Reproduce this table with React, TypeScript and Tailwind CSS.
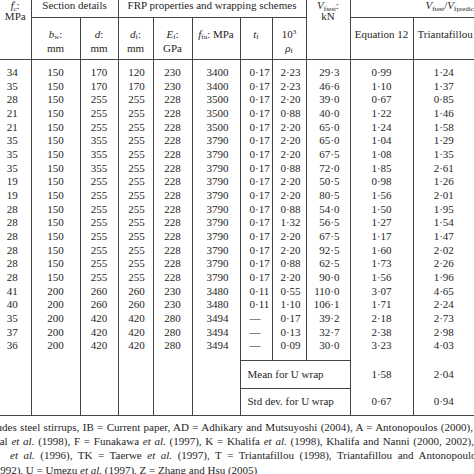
import type { ReactNode } from 'react'

const rows: string[][] = [
  ['34', '150', '170', '120', '230', '3400', '0·17', '2·23', '29·3', '0·99', '1·24'],
  ['35', '150', '170', '170', '230', '3400', '0·17', '2·23', '46·6', '1·10', '1·37'],
  ['28', '150', '255', '255', '228', '3500', '0·17', '2·20', '39·0', '0·67', '0·85'],
  ['21', '150', '255', '255', '228', '3500', '0·17', '0·88', '40·0', '1·22', '1·46'],
  ['21', '150', '255', '255', '228', '3500', '0·17', '2·20', '65·0', '1·24', '1·58'],
  ['35', '150', '355', '255', '228', '3790', '0·17', '2·20', '65·0', '1·04', '1·29'],
  ['35', '150', '355', '255', '228', '3790', '0·17', '2·20', '67·5', '1·08', '1·35'],
  ['35', '150', '355', '255', '228', '3790', '0·17', '0·88', '72·0', '1·85', '2·61'],
  ['19', '150', '255', '255', '228', '3790', '0·17', '2·20', '50·5', '0·98', '1·26'],
  ['19', '150', '255', '255', '228', '3790', '0·17', '2·20', '80·5', '1·56', '2·01'],
  ['28', '150', '255', '255', '228', '3790', '0·17', '0·88', '54·0', '1·50', '1·95'],
  ['28', '150', '255', '255', '228', '3790', '0·17', '1·32', '56·5', '1·27', '1·54'],
  ['28', '150', '255', '255', '228', '3790', '0·17', '2·20', '67·5', '1·17', '1·47'],
  ['28', '150', '255', '255', '228', '3790', '0·17', '2·20', '92·5', '1·60', '2·02'],
  ['28', '150', '255', '255', '228', '3790', '0·17', '0·88', '62·5', '1·73', '2·26'],
  ['28', '150', '255', '255', '228', '3790', '0·17', '2·20', '90·0', '1·56', '1·96'],
  ['41', '200', '260', '260', '230', '3480', '0·11', '0·55', '110·0', '3·07', '4·65'],
  ['40', '200', '260', '260', '230', '3480', '0·11', '1·10', '106·1', '1·71', '2·24'],
  ['35', '200', '420', '420', '280', '3494', '—', '0·17', '39·2', '2·18', '2·73'],
  ['37', '200', '420', '420', '280', '3494', '—', '0·13', '32·7', '2·38', '2·98'],
  ['36', '200', '420', '420', '280', '3494', '—', '0·09', '30·0', '3·23', '4·03'],
]

const widths = [31, 49, 38, 35, 39, 48, 32, 34, 44, 63, 61]

// alignment per column, tuned to the scan
const align = [
  'text-center pr-[6px]',
  'text-center',
  'text-center',
  'text-center pl-[2px]',
  'text-center',
  'text-center pl-[3px]',
  'text-left pl-[9px]',
  'text-center pl-[3px]',
  'text-right pr-[10px]',
  'text-center',
  'text-center',
]

const line = 'border-[#444]'

function Sym({ base, sub, colon }: { base: string; sub?: string; colon?: boolean }) {
  return (
    <span className="whitespace-nowrap">
      <i>{base}</i>
      {sub && <sub className="text-[7px]">{sub}</sub>}
      {colon && ':'}
    </span>
  )
}

function Spacer({ h }: { h: string }) {
  return (
    <tr className={h}>
      {widths.map((_, i) => (
        <td key={i} className={`p-0 ${i < 10 ? 'border-r' : ''} ${line}`} />
      ))}
    </tr>
  )
}

function Head2({ children, last, extra }: { children: ReactNode; last?: boolean; extra?: string }) {
  return (
    <th className={`p-0 pt-[9px] align-top font-normal leading-[14px] border-b ${last ? '' : 'border-r'} ${line} ${extra ?? ''}`}>
      {children}
    </th>
  )
}

export default function App() {
  return (
    <div className="w-[474px] h-[474px] overflow-hidden bg-white text-[#262626] text-[11px] font-['Liberation_Serif','Times_New_Roman',serif]">
      <table className="table-fixed border-collapse w-[474px]">
        <colgroup>
          {widths.map((w, i) => (
            <col key={i} style={{ width: w }} />
          ))}
        </colgroup>
        <thead>
          <tr className="h-[17px]">
            <th rowSpan={2} className={`p-0 align-top font-normal leading-[11px] border-r border-b ${line}`}>
              <div className="whitespace-nowrap">
                <i>f</i>
                <sup className="text-[7px]">′</sup>
                <sub className="text-[7px] ml-[-2px]">c</sub>:
              </div>
              <div>MPa</div>
            </th>
            <th colSpan={2} className={`p-0 align-top font-normal leading-[11px] border-r border-b ${line}`}>
              Section details
            </th>
            <th colSpan={5} className={`p-0 align-top font-normal leading-[11px] border-r border-b whitespace-nowrap ${line}`}>
              FRP properties and wrapping schemes
            </th>
            <th rowSpan={2} className={`p-0 align-top font-normal leading-[11px] border-r border-b ${line}`}>
              <div>
                <Sym base="V" sub="ftest" colon />
              </div>
              <div>kN</div>
            </th>
            <th colSpan={2} className={`p-0 pl-[75px] align-top text-left font-normal leading-[11px] border-b whitespace-nowrap overflow-hidden ${line}`}>
              <Sym base="V" sub="ftest" />/<Sym base="V" sub="fpredicted" />
            </th>
          </tr>
          <tr className="h-[42px]">
            <Head2>
              <div><Sym base="b" sub="w" colon /></div>
              <div>mm</div>
            </Head2>
            <Head2>
              <div><Sym base="d" colon /></div>
              <div>mm</div>
            </Head2>
            <Head2>
              <div><Sym base="d" sub="f" colon /></div>
              <div>mm</div>
            </Head2>
            <Head2>
              <div><Sym base="E" sub="f" colon /></div>
              <div>GPa</div>
            </Head2>
            <Head2 extra="whitespace-nowrap">
              <Sym base="f" sub="fu" colon /> MPa
            </Head2>
            <Head2>
              <Sym base="t" sub="f" />
            </Head2>
            <Head2>
              <div>
                10<sup className="text-[7px]">3</sup>
              </div>
              <div><Sym base="ρ" sub="f" /></div>
            </Head2>
            <Head2 extra="whitespace-nowrap">Equation 12</Head2>
            <Head2 last extra="whitespace-nowrap text-left pl-[4px]">Triantafillou</Head2>
          </tr>
        </thead>
        <tbody>
          <Spacer h="h-[7px]" />
          {rows.map((r, ri) => (
            <tr key={ri} className="h-[13.67px]">
              {r.map((v, i) => (
                <td key={i} className={`p-0 leading-[13.67px] whitespace-nowrap ${align[i]} ${i < 10 ? 'border-r' : ''} ${line}`}>
                  {v}
                </td>
              ))}
            </tr>
          ))}
          <Spacer h="h-[7px]" />
          <tr className="h-[28px]">
            {widths.slice(0, 6).map((_, i) => (
              <td key={i} className={`p-0 border-r ${line}`} />
            ))}
            <td colSpan={3} className={`p-0 pl-[7px] text-left whitespace-nowrap border-t border-b border-r ${line}`}>
              Mean for U wrap
            </td>
            <td className={`p-0 text-center border-r ${line}`}>1·58</td>
            <td className="p-0 text-center">2·04</td>
          </tr>
          <tr className="h-[27px]">
            {widths.slice(0, 6).map((_, i) => (
              <td key={i} className={`p-0 border-r border-b ${line}`} />
            ))}
            <td colSpan={3} className={`p-0 pl-[7px] text-left whitespace-nowrap border-b border-r ${line}`}>
              Std dev. for U wrap
            </td>
            <td className={`p-0 text-center border-r border-b ${line}`}>0·67</td>
            <td className={`p-0 text-center border-b ${line}`}>0·94</td>
          </tr>
        </tbody>
      </table>
      <div className="pt-[4px] leading-[14.3px] whitespace-nowrap">
        <div className="ml-[-26px] [word-spacing:0.6px]">
          *Includes steel stirrups, IB = Current paper, AD = Adhikary and Mutsuyoshi (2004), A = Antonopoulos (2000),
        </div>
        <div className="ml-[-29px] [word-spacing:1px]">
          Chaallal <i>et al.</i> (1998), F = Funakawa <i>et al.</i> (1997), K = Khalifa <i>et al.</i> (1998), Khalifa and Nanni (2000, 2002),
        </div>
        <div className="ml-[10px] [word-spacing:2.8px]">
          <i>et al.</i> (1996), TK = Taerwe <i>et al.</i> (1997), T = Triantafillou (1998), Triantafillou and Antonopoulos (2000)
        </div>
        <div className="ml-[-9px]">
          (1992), U = Umezu <i>et al.</i> (1997), Z = Zhang and Hsu (2005)
        </div>
      </div>
    </div>
  )
}
